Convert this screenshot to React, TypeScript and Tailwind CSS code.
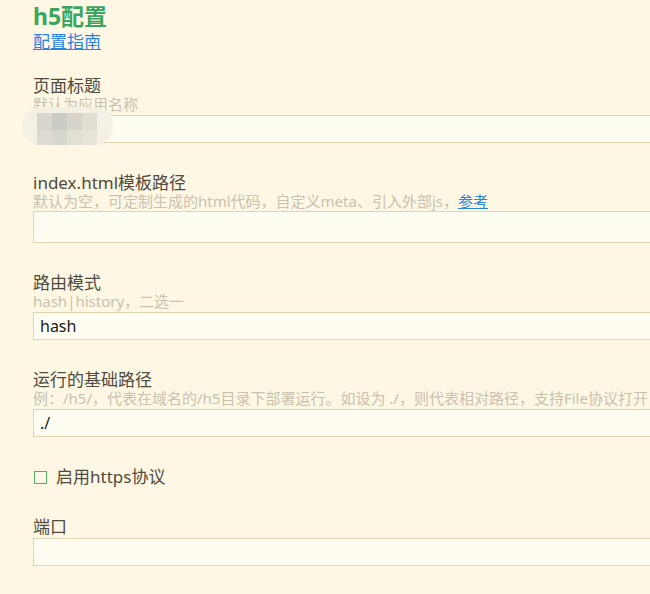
import React from 'react';

const font = { fontFamily: '"Noto Sans", "Noto Sans CJK SC", sans-serif' };

function Field({
  label,
  hint,
  value,
  tall,
  gap = 'mt-[2px]',
}: {
  label: string;
  hint?: React.ReactNode;
  value?: string;
  tall?: boolean;
  gap?: string;
}) {
  return (
    <div>
      <div className="text-[17px] leading-[20px] text-[#4f4b40]">{label}</div>
      {hint && <div className="text-[15px] leading-[17px] text-[#c9c2ae] whitespace-nowrap">{hint}</div>}
      <div
        className={`${gap} ${tall ? 'h-[32px]' : 'h-[28px]'} w-[640px] border border-[#e0d5ae] bg-[#fffcf2] px-[6px] flex items-center text-[16px] text-[#1a1a1a]`}
      >
        {value}
      </div>
    </div>
  );
}

export default function App() {
  return (
    <div className="relative w-[650px] h-[594px] overflow-hidden bg-[#fdf7e4] pl-[33px] pt-[2px]" style={font}>
      <h1 className="text-[23px] leading-[28px] font-bold text-[#3ba55d]">h5配置</h1>
      <a className="mt-[2px] block text-[17px] leading-[20px] text-[#2a84e2] underline">配置指南</a>

      <div className="mt-[24px] flex flex-col gap-[30px]">
        <Field label="页面标题" hint="默认为应用名称" />
        <Field
          label="index.html模板路径"
          hint={
            <>
              默认为空，可定制生成的html代码，自定义meta、引入外部js，
              <a className="text-[#2a84e2] underline">参考</a>
            </>
          }
          tall
          gap="mt-[1px]"
        />
        <Field label="路由模式" hint="hash|history，二选一" value="hash" />
        <Field
          label="运行的基础路径"
          hint="例：/h5/，代表在域名的/h5目录下部署运行。如设为 ./，则代表相对路径，支持File协议打开"
          value="./"
        />
        <label className="flex items-center gap-[9px] text-[17px] leading-[20px] text-[#4f4b40]">
          <span className="ml-[1px] h-[13px] w-[13px] border border-[#4caf63]" />
          启用https协议
        </label>
        <Field label="端口" gap="mt-[1px]" />
      </div>

      {/* blurred overlay */}
      <div className="absolute left-[22px] top-[107px] h-[38px] w-[91px] rounded-[18px] bg-[#f4f0e4]">
        <div className="absolute left-[15px] top-[6px] grid grid-cols-4">
          <div className="h-[17px] w-[15px] bg-[#d8d6cc]" />
          <div className="h-[17px] w-[15px] bg-[#c9cbc4]" />
          <div className="h-[17px] w-[15px] bg-[#d6d3ca]" />
          <div className="h-[17px] w-[15px] bg-[#e0ddd3]" />
          <div className="h-[15px] w-[15px] bg-[#dedcd2]" />
          <div className="h-[15px] w-[15px] bg-[#d6d7cd]" />
          <div className="h-[15px] w-[15px] bg-[#e2dfd5]" />
          <div className="h-[15px] w-[15px] bg-[#e6e3d9]" />
        </div>
      </div>
    </div>
  );
}
